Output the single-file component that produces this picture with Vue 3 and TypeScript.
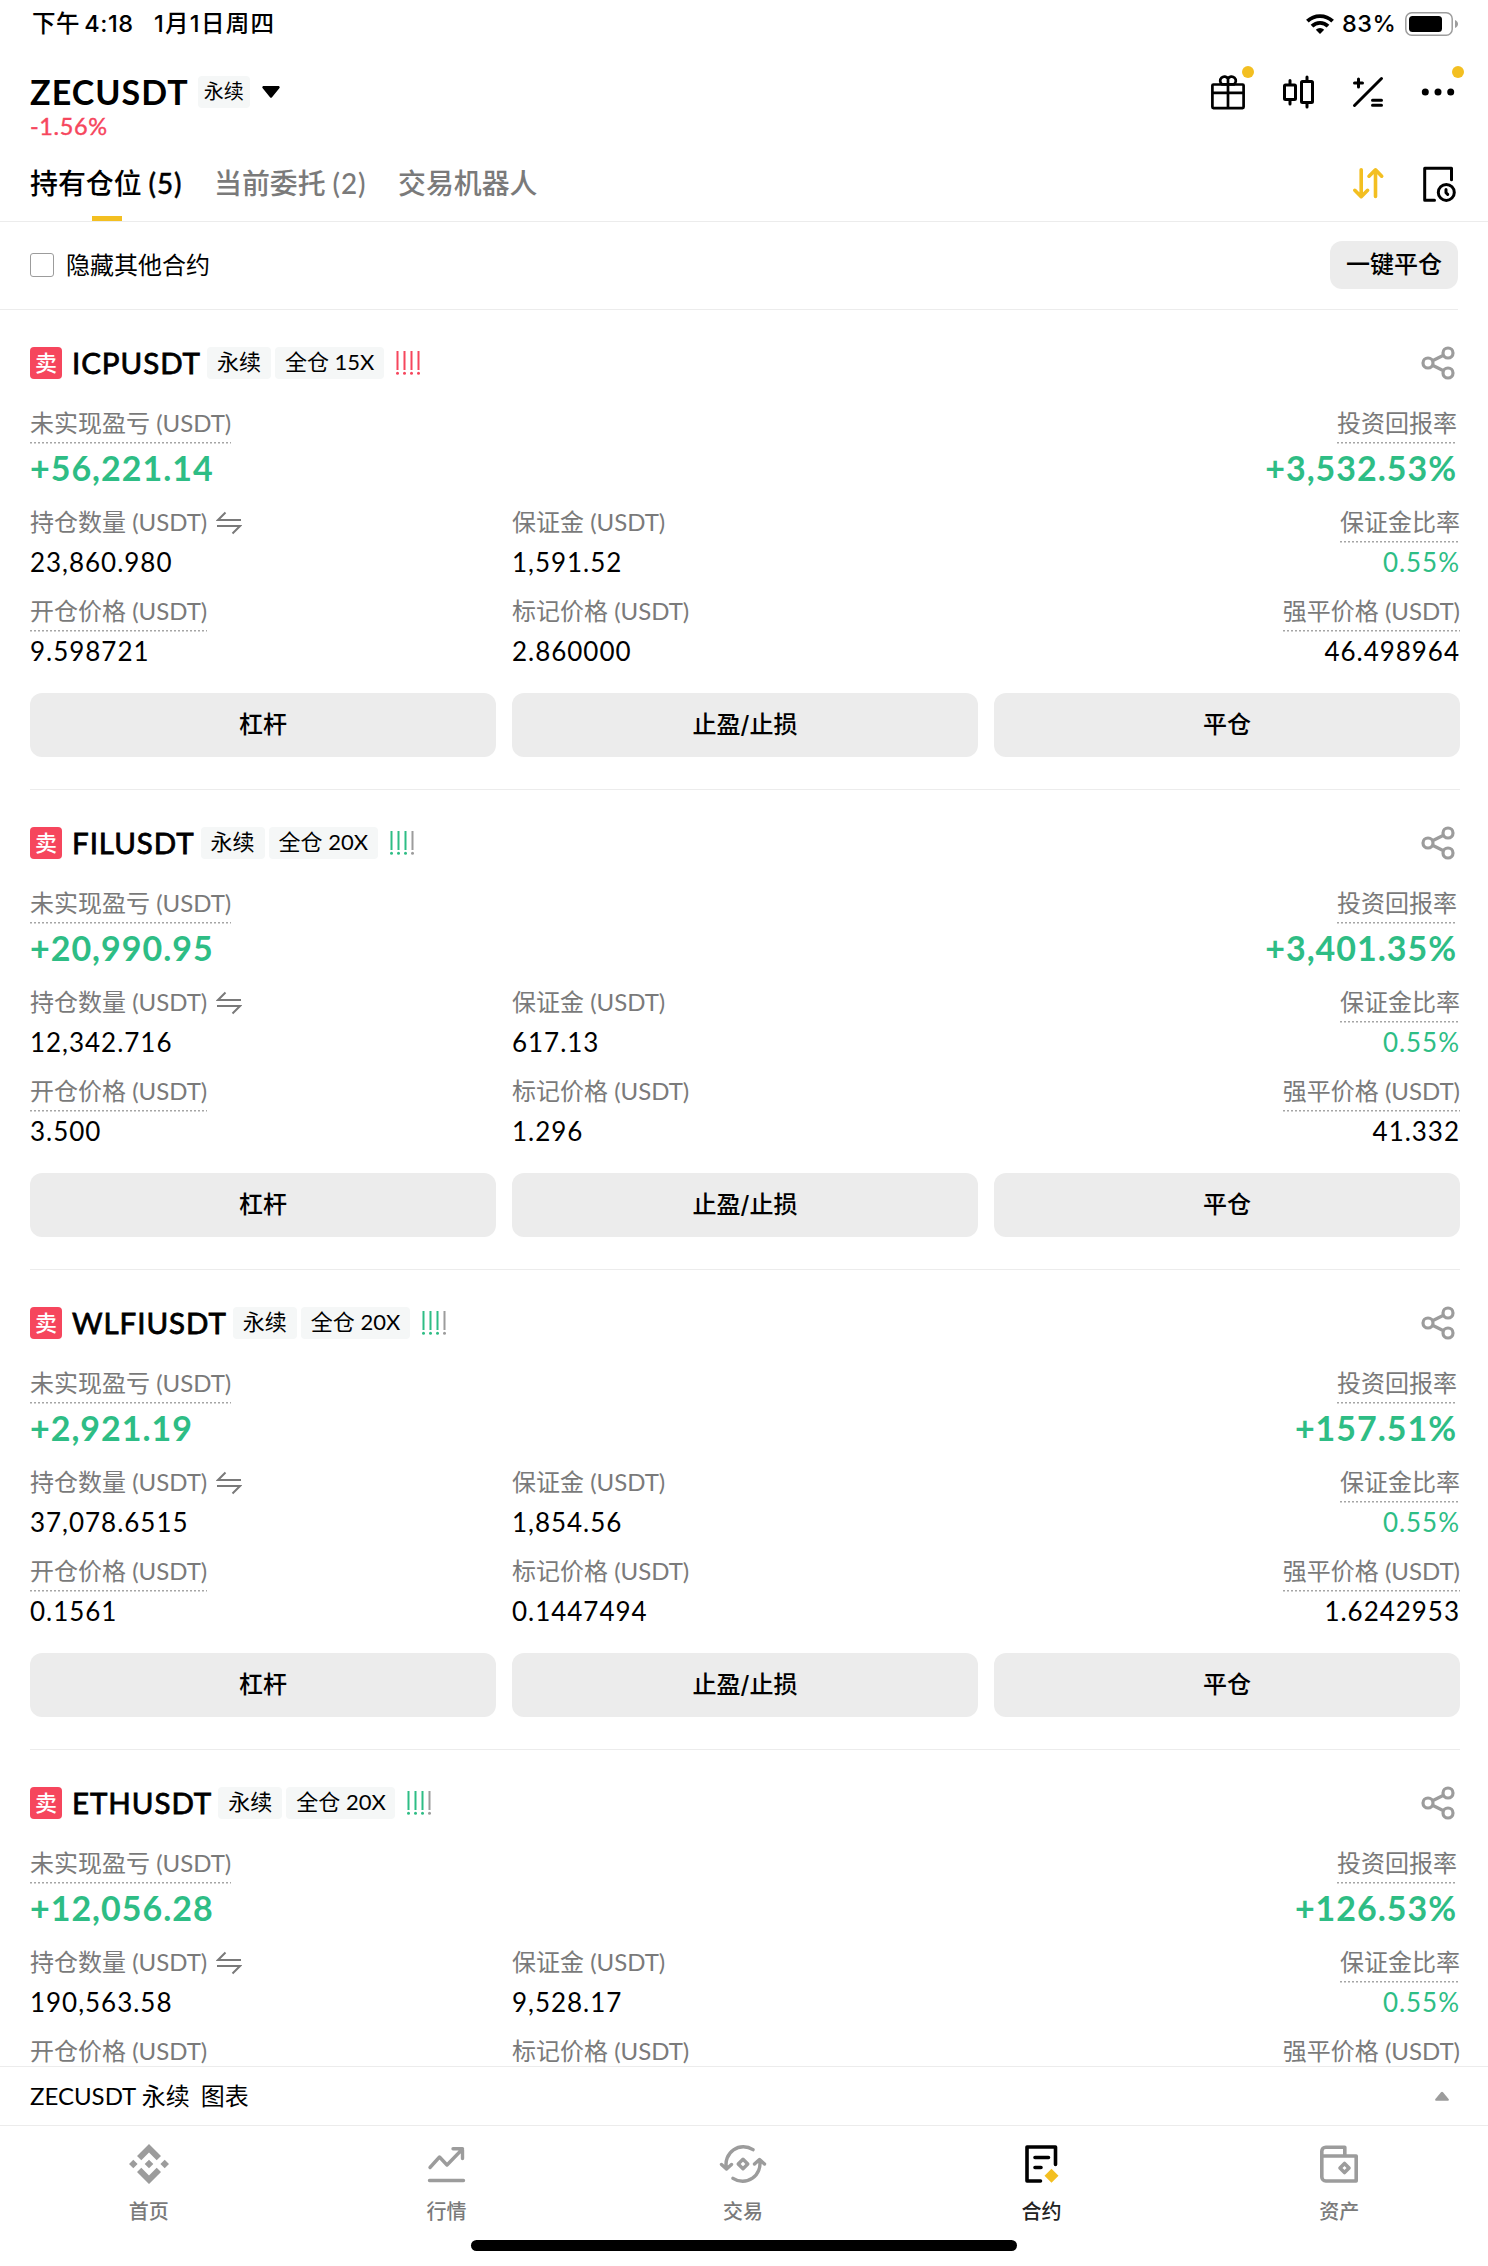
<script setup lang="ts">
interface Position {
  symbol: string
  lever: string
  danger: boolean
  pnl: string
  roi: string
  size: string
  margin: string
  entry?: string
  mark?: string
  liq?: string
}

const positions: Position[] = [
  { symbol: 'ICPUSDT', lever: '15X', danger: true, pnl: '+56,221.14', roi: '+3,532.53%', size: '23,860.980', margin: '1,591.52', entry: '9.598721', mark: '2.860000', liq: '46.498964' },
  { symbol: 'FILUSDT', lever: '20X', danger: false, pnl: '+20,990.95', roi: '+3,401.35%', size: '12,342.716', margin: '617.13', entry: '3.500', mark: '1.296', liq: '41.332' },
  { symbol: 'WLFIUSDT', lever: '20X', danger: false, pnl: '+2,921.19', roi: '+157.51%', size: '37,078.6515', margin: '1,854.56', entry: '0.1561', mark: '0.1447494', liq: '1.6242953' },
  { symbol: 'ETHUSDT', lever: '20X', danger: false, pnl: '+12,056.28', roi: '+126.53%', size: '190,563.58', margin: '9,528.17' },
]

const GREEN = '#2ebd85'
const RED = '#f6465d'
const GREY = '#9c9c9c'

// The fourth bar stays grey unless the position is at the highest risk level
function barColor(p: Position, i: number): string {
  if (p.danger) return RED
  return i < 4 ? GREEN : GREY
}
</script>

<template>
  <div class="screen">
    <div class="status">
      <span class="time">下午<i></i>4:18</span>
      <span class="date">1月1日周四</span>
      <svg class="wifi" width="28" height="20" viewBox="0 0 28 20" fill="none" stroke="#000" stroke-width="3.8">
        <path d="M1.4 7.2a18 18 0 0 1 25.2 0" />
        <path d="M6 12.1a11.4 11.4 0 0 1 16 0" />
        <path d="M14 20l-4.2-4.3a6 6 0 0 1 8.4 0z" fill="#000" stroke="none" />
      </svg>
      <span class="pct">83%</span>
      <svg class="battery" width="54" height="24" viewBox="0 0 54 24">
        <rect x="0.8" y="0.8" width="46.4" height="22.4" rx="6" fill="none" stroke="#9d9d9d" stroke-width="1.5" />
        <rect x="4" y="4" width="33" height="16" rx="3.5" />
        <path d="M50 8v8c2-.8 3-2.300 3-4s-1-3.200-3-4z" fill="#9d9d9d" />
      </svg>
    </div>

    <header class="head">
      <div class="pair">
        <div class="pair-row">
          <span class="pair-name">ZECUSDT</span>
          <span class="tag tag-sm">永续</span>
          <svg class="caret" width="18" height="12" viewBox="0 0 18 12"><path d="M1.800 0h14.400c1.400 0 2 1.300 1.100 2.300L10 11.300c-.6.7-1.400.7-2 0L.7 2.300C-.2 1.300.4 0 1.800 0z" /></svg>
        </div>
        <div class="change">-1.56%</div>
      </div>
      <div class="tools">
        <div class="tool">
          <svg width="36" height="36" viewBox="0 0 36 36" fill="none" stroke="#000" stroke-width="2.700">
            <rect x="2.400" y="10.500" width="31.200" height="23.600" rx="1" />
            <path d="M2 18.800h32M18 9v25M17.500 10.300H12a4.200 4.200 0 1 1 6-5.600 4.200 4.200 0 1 1 6 5.600h-5.500M18 4.700V10" />
          </svg>
          <b class="dot"></b>
        </div>
        <div class="tool">
          <svg width="36" height="36" viewBox="0 0 36 36" fill="none" stroke="#000" stroke-width="3" stroke-linecap="round">
            <rect x="4.500" y="11" width="11" height="14.500" rx="1" />
            <rect x="21.500" y="7.500" width="11" height="21" rx="1" />
            <path d="M10 6.500v4M10 26v4M27 3v4M27 29v4" />
          </svg>
        </div>
        <div class="tool">
          <svg width="36" height="36" viewBox="0 0 36 36" fill="none" stroke="#000" stroke-width="3" stroke-linecap="round">
            <path d="M4.500 31.500L31.500 4.500M4.500 9h8M8.500 5v8" />
            <path d="M22.500 26.300h9M22.500 31.300h9" />
          </svg>
        </div>
        <div class="tool">
          <svg width="36" height="36" viewBox="0 0 36 36"><circle cx="5.300" cy="18" r="3.500" /><circle cx="18" cy="18" r="3.500" /><circle cx="30.700" cy="18" r="3.500" /></svg>
          <b class="dot"></b>
        </div>
      </div>
    </header>

    <nav class="tabs">
      <span class="tab on t1">持有仓位 <em>(5)</em></span>
      <span class="tab t2">当前委托 <em>(2)</em></span>
      <span class="tab">交易机器人</span>
      <div class="tab-tools">
        <svg width="36" height="36" viewBox="0 0 36 36" fill="none" stroke="#f3bf21" stroke-width="3.600" stroke-linecap="round" stroke-linejoin="round">
          <path d="M11.200 4.700v26.500M4.800 25.300l6.400 6.400 6.400-6.400M25.500 31.500V5M19 11.200l6.500-6.400 6.200 6.400" />
        </svg>
        <svg width="36" height="38" viewBox="0 0 36 38" fill="none" stroke="#000" stroke-width="3" stroke-linecap="round" stroke-linejoin="round">
          <path d="M14.500 35.300H4.700V3.300h26.800v11.500" />
          <circle cx="26.300" cy="27.400" r="8" />
          <path d="M26 24.500v3.200l1.700 1.700" />
        </svg>
      </div>
    </nav>

    <div class="filter">
      <span class="check"></span>
      <span class="filter-text">隐藏其他合约</span>
      <button class="close-all">一键平仓</button>
    </div>

    <main class="list">
      <section v-for="p in positions" :key="p.symbol" class="card">
        <div class="card-head">
          <span class="side">卖</span>
          <span class="sym">{{ p.symbol }}</span>
          <span class="tag">永续</span>
          <span class="tag tag-lev">全仓 <em>{{ p.lever }}</em></span>
          <svg class="risk" width="26" height="24" viewBox="0 0 26 24">
            <g v-for="i in 4" :key="i" :fill="barColor(p, i)">
              <rect :x="i * 7 - 6.500" y="0" width="2" height="19" />
              <circle :cx="i * 7 - 5.500" cy="22.300" r="1.500" />
            </g>
          </svg>
          <svg class="share" width="36" height="36" viewBox="0 0 36 36" fill="none" stroke="#9c9c9c" stroke-width="3.200">
            <circle cx="8" cy="18" r="5" /><circle cx="28" cy="8" r="5" /><circle cx="28" cy="28" r="5" />
            <path d="M12.500 15.800l11-5.600M12.500 20.200l11 5.600" />
          </svg>
        </div>

        <div class="top">
          <div><span class="label dotted">未实现盈亏 <em>(USDT)</em></span><div class="big">{{ p.pnl }}</div></div>
          <div class="end"><span class="label dotted roi">投资回报率</span><div class="big">{{ p.roi }}</div></div>
        </div>

        <div class="row">
          <div>
            <span class="label">持仓数量 <em>(USDT)</em>
              <svg class="swap" width="26" height="24" viewBox="0 0 26 24" fill="none" stroke="#7a7a7a" stroke-width="2"><path d="M25 9H2L9.500 1.500M1 15h23l-7.500 7.500" /></svg>
            </span>
            <div class="val">{{ p.size }}</div>
          </div>
          <div><span class="label">保证金 <em>(USDT)</em></span><div class="val">{{ p.margin }}</div></div>
          <div class="end"><span class="label dotted">保证金比率</span><div class="val green">0.55%</div></div>
        </div>

        <div class="row row2">
          <div><span class="label dotted">开仓价格 <em>(USDT)</em></span><div v-if="p.entry" class="val">{{ p.entry }}</div></div>
          <div><span class="label">标记价格 <em>(USDT)</em></span><div v-if="p.mark" class="val">{{ p.mark }}</div></div>
          <div class="end"><span class="label dotted">强平价格 <em>(USDT)</em></span><div v-if="p.liq" class="val">{{ p.liq }}</div></div>
        </div>

        <div v-if="p.entry" class="actions">
          <button>杠杆</button>
          <button>止盈/止损</button>
          <button>平仓</button>
        </div>
      </section>
    </main>

    <div class="chart-bar">
      <span><em>ZECUSDT</em> 永续 <i></i>图表</span>
      <svg width="16" height="12" viewBox="0 0 16 12" fill="#9c9c9c"><path d="M1.400 9L7 2.300c.6-.7 1.400-.7 2 0L14.600 9c.6.900.3 1.700-.7 1.700H2.100C1.100 10.700.8 9.900 1.400 9z" /></svg>
    </div>

    <footer class="nav">
      <div class="nav-item">
        <svg width="48" height="48" viewBox="0 0 48 48" fill="#9c9c9c">
          <path d="M24 4L36 16l-4.300 4.300L24 12.600l-7.700 7.700L12 16zM24 44L12 32l4.300-4.300 7.700 7.700 7.700-7.700L36 32zM24 19.700l4.300 4.300-4.300 4.300-4.300-4.300zM8.300 19.700l4.300 4.300-4.300 4.300L4 24zM39.700 19.700L44 24l-4.300 4.300-4.300-4.300z" />
        </svg>
        <span>首页</span>
      </div>
      <div class="nav-item">
        <svg width="48" height="48" viewBox="0 0 48 48" fill="none" stroke="#9c9c9c" stroke-width="3.400" stroke-linecap="round" stroke-linejoin="round">
          <path d="M8 27.500L17.500 17l7.500 8L40.500 9M31 8.700h9.500v9.800M7.500 40.500h34" />
        </svg>
        <span>行情</span>
      </div>
      <div class="nav-item trade">
        <svg width="48" height="48" viewBox="0 0 48 48" fill="none" stroke="#9c9c9c" stroke-width="3.400" stroke-linecap="round" stroke-linejoin="round">
          <path d="M34 9.700A17.300 17.300 0 0 0 7.500 28M2.500 24.500l5 4.500 5-4.500M14 38.300A17.300 17.300 0 0 0 40.500 20M35.500 24l5-4.500 5 4.500" />
          <path d="M24 19.200l4.800 4.800-4.800 4.800-4.800-4.800z" />
        </svg>
        <span>交易</span>
      </div>
      <div class="nav-item active">
        <svg width="48" height="48" viewBox="0 0 48 48" fill="none" stroke="#000" stroke-width="3.600" stroke-linecap="round" stroke-linejoin="round">
          <path d="M22.500 41H9V7h28.500v17.500M17 17.500h13.500M17 27.500h6" />
          <path d="M33.500 28.800l7 7-7 7-7-7z" fill="#f3bf21" stroke="none" />
        </svg>
        <span>合约</span>
      </div>
      <div class="nav-item">
        <svg width="48" height="48" viewBox="0 0 48 48" fill="none" stroke="#9c9c9c" stroke-width="3.600" stroke-linejoin="round">
          <path d="M6.800 16h34.400v25H10.800a4 4 0 0 1-4-4V11.200a4 4 0 0 1 4-4h19V16" />
          <path d="M29.500 23.500l4.500 4.500-4.500 4.500-4.500-4.500z" />
        </svg>
        <span>资产</span>
      </div>
    </footer>
    <div class="home-indicator"></div>
  </div>
</template>

<style>
body { margin: 0; background: #fff; }
</style>

<style scoped>
.screen {
  width: 1488px;
  height: 2266px;
  display: flex;
  flex-direction: column;
  overflow: hidden;
  background: #fff;
  color: #000;
  font-family: Lato, "Noto Sans CJK SC", sans-serif;
  font-size: 24px;
}
* { box-sizing: border-box; }
em { font-style: normal; }
svg { display: block; flex: none; }
button { border: 0; padding: 0; background: #ececec; color: #000; font: 500 24px/34px Inter, "Noto Sans CJK SC", sans-serif; }

.status {
  height: 64px;
  flex: none;
  display: flex;
  align-items: flex-start;
  padding: 8px 30px 0 32px;
  font: 500 23.500px/32px Inter, "Noto Sans CJK SC", sans-serif;
  white-space: nowrap;
}
.time { width: 122px; letter-spacing: 0.6px; }
.time i { display: inline-block; width: 4px; }
.date { letter-spacing: 1.300px; }
.wifi { margin: 6px 8px 0 auto; }
.pct { width: 63px; letter-spacing: 0.5px; }
.battery { margin: 4px -1px 0 0; }

.head { height: 88px; flex: none; display: flex; justify-content: space-between; padding: 0 32px 0 30px; }
.pair-row { display: flex; align-items: center; height: 56px; }
.pair-name { font-size: 34px; font-weight: 700; line-height: 56px; letter-spacing: 1.050px; }
.caret { margin-left: 12px; }
.change { color: #f6465d; font-size: 23.500px; line-height: 28px; margin-top: -8px; letter-spacing: 0.6px; -webkit-text-stroke: 0.4px #f6465d; }
.tools { display: flex; gap: 34px; padding-top: 10px; }
.tool { position: relative; width: 36px; height: 36px; }
.dot { position: absolute; left: 32px; top: -8px; width: 12px; height: 12px; border-radius: 50%; background: #f3bf21; }

.tag {
  height: 32px;
  padding: 0 10px;
  border-radius: 4px;
  background: #f5f7f7;
  font-size: 22px;
  line-height: 30px;
  white-space: nowrap;
}
.tag-sm { width: 52px; margin-left: 9px; padding: 0; text-align: center; font-size: 20px; line-height: 31px; }

.tabs { height: 70px; flex: none; display: flex; padding: 12px 32px 0 30px; border-bottom: 1px solid #ececec; }
.tab { font-size: 27.900px; font-weight: 500; line-height: 38px; color: #7a7a7a; white-space: nowrap; }
.tab em { letter-spacing: 0.9px; }
.tab.on { color: #000; position: relative; }
.tab.on em { -webkit-text-stroke: 0.4px #000; }
.tab.on::after { content: ""; position: absolute; left: 62px; top: 52px; width: 30px; height: 5px; background: #f3bf21; }
.t1, .t2 { width: 184px; }
.tab-tools { margin-left: auto; display: flex; gap: 34px; padding-top: 1px; }

.filter { width: 1458px; height: 88px; flex: none; display: flex; align-items: center; padding: 0 0 2px 30px; border-bottom: 1px solid #ececec; }
.check { width: 24px; height: 24px; border: 1.500px solid #9c9c9c; border-radius: 3px; }
.filter-text { margin-left: 12px; padding-bottom: 2px; }
.close-all { margin-left: auto; width: 128px; height: 48px; border-radius: 12px; }

.list { height: 1756px; flex: none; overflow: hidden; }
.card { width: 1430px; height: 480px; margin-left: 30px; padding-top: 37px; overflow: hidden; border-bottom: 1px solid #ececec; }
.card-head { display: flex; align-items: center; height: 32px; }
.side { width: 32px; height: 32px; border-radius: 4px; background: #f6465d; color: #fff; font-size: 22px; font-weight: 500; line-height: 31px; text-align: center; }
.sym { margin: 0 6px 0 10px; font-family: Lato, sans-serif; font-size: 29.500px; line-height: 32px; letter-spacing: 0.95px; -webkit-text-stroke: 0.8px #000; }
.tag-lev { width: 109px; margin-left: 4px; }
.risk { margin-left: 12px; }
.share { margin-left: auto; margin-right: 4px; }

.top { display: flex; justify-content: space-between; margin-top: 26px; padding-right: 4px; }
.end { text-align: right; }
.end .big { margin-right: -1px; }
.label { display: inline-block; vertical-align: top; height: 39px; line-height: 36px; color: #7a7a7a; white-space: nowrap; }
.dotted { background: repeating-linear-gradient(90deg, #a5a5a5 0 2px, transparent 2px 4px) 0 37px / 100% 1.500px no-repeat; }
.roi { margin-right: -1px; }
.big { margin-top: 4px; height: 40px; line-height: 39px; font-size: 34px; font-weight: 700; letter-spacing: 0.98px; color: #2ebd85; }
.row { display: grid; grid-template-columns: repeat(3, 466px); column-gap: 16px; margin-top: 16px; }
.row2 { margin-top: 15px; }
.val { margin-top: 3px; height: 32px; line-height: 32px; font-size: 26px; letter-spacing: 0.98px; }
.green { color: #2ebd85; }
.swap { display: inline-block; vertical-align: -4px; margin-left: 9px; }
.actions { display: grid; grid-template-columns: repeat(3, 466px); column-gap: 16px; margin-top: 26px; }
.actions button { height: 64px; border-radius: 12px; }

.chart-bar { height: 60px; flex: none; display: flex; justify-content: space-between; align-items: center; padding: 0 38px 0 30px; border-top: 1px solid #ececec; border-bottom: 1px solid #ececec; background: #fff; }
.chart-bar span { padding-bottom: 4px; }
.chart-bar i { display: inline-block; width: 5px; }

.nav { height: 114px; flex: none; display: grid; grid-template-columns: repeat(5, 1fr); }
.nav-item { display: flex; flex-direction: column; align-items: center; padding-top: 14px; color: #7a7a7a; font-size: 20px; line-height: 30px; font-weight: 500; }
.nav-item span { margin-top: 8px; }
.trade { padding-right: 2px; }
.nav .active { color: #222; }
.home-indicator { width: 546px; height: 11px; flex: none; margin: 0 auto; border-radius: 6px; background: #000; }
</style>
